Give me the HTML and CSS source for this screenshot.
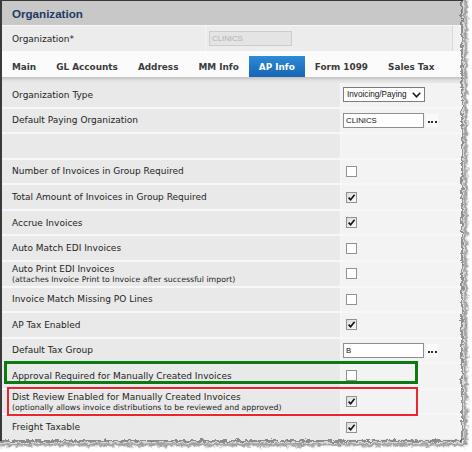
FILE: index.html
```html
<!DOCTYPE html>
<html>
<head>
<meta charset="utf-8">
<link rel="stylesheet" href="styles.css">
</head>
<body>
<div class="page">
  <div class="paper">
    <div class="header">Organization</div>
    <div class="org-row">
      <div class="org-label">Organization*</div>
      <div class="org-field"><span class="field disabled">CLINICS</span></div>
      <div class="org-end"></div>
    </div>
    <nav class="tabs">
      <span class="tab">Main</span>
      <span class="tab">GL Accounts</span>
      <span class="tab">Address</span>
      <span class="tab">MM Info</span>
      <span class="tab active">AP Info</span>
      <span class="tab">Form 1099</span>
      <span class="tab">Sales Tax</span>
    </nav>
    <div class="tab-shadow"></div>
    <div class="rows">
      <div class="row"><div class="label">Organization Type</div><div class="value"><span class="select">Invoicing/Paying<svg class="chev" width="9" height="6" viewBox="0 0 9 6"><path d="M0.8 0.8 L4.5 4.8 L8.2 0.8" fill="none" stroke="#1a1a1a" stroke-width="1.6"/></svg></span></div></div>
      <div class="row"><div class="label">Default Paying Organization</div><div class="value"><span class="field">CLINICS</span><span class="lookup"></span></div></div>
      <div class="row"><div class="label"></div><div class="value"></div></div>
      <div class="row"><div class="label">Number of Invoices in Group Required</div><div class="value"><span class="cb"></span></div></div>
      <div class="row"><div class="label">Total Amount of Invoices in Group Required</div><div class="value"><span class="cb on"><svg width="9" height="9" viewBox="0 0 9 9"><path d="M1.6 4.6 L3.6 6.8 L7.6 1.8" fill="none" stroke="#111" stroke-width="1.6"/></svg></span></div></div>
      <div class="row"><div class="label">Accrue Invoices</div><div class="value"><span class="cb on"><svg width="9" height="9" viewBox="0 0 9 9"><path d="M1.6 4.6 L3.6 6.8 L7.6 1.8" fill="none" stroke="#111" stroke-width="1.6"/></svg></span></div></div>
      <div class="row"><div class="label">Auto Match EDI Invoices</div><div class="value"><span class="cb"></span></div></div>
      <div class="row"><div class="label two"><span>Auto Print EDI Invoices</span><span class="sub">(attaches Invoice Print to Invoice after successful import)</span></div><div class="value"><span class="cb"></span></div></div>
      <div class="row"><div class="label">Invoice Match Missing PO Lines</div><div class="value"><span class="cb"></span></div></div>
      <div class="row"><div class="label">AP Tax Enabled</div><div class="value"><span class="cb on"><svg width="9" height="9" viewBox="0 0 9 9"><path d="M1.6 4.6 L3.6 6.8 L7.6 1.8" fill="none" stroke="#111" stroke-width="1.6"/></svg></span></div></div>
      <div class="row"><div class="label">Default Tax Group</div><div class="value"><span class="field">B</span><span class="lookup"></span></div></div>
      <div class="row"><div class="label">Approval Required for Manually Created Invoices</div><div class="value"><span class="cb"></span></div></div>
      <div class="row"><div class="label two"><span>Dist Review Enabled for Manually Created Invoices</span><span class="sub">(optionally allows invoice distributions to be reviewed and approved)</span></div><div class="value"><span class="cb on"><svg width="9" height="9" viewBox="0 0 9 9"><path d="M1.6 4.6 L3.6 6.8 L7.6 1.8" fill="none" stroke="#111" stroke-width="1.6"/></svg></span></div></div>
      <div class="row"><div class="label">Freight Taxable</div><div class="value"><span class="cb on"><svg width="9" height="9" viewBox="0 0 9 9"><path d="M1.6 4.6 L3.6 6.8 L7.6 1.8" fill="none" stroke="#111" stroke-width="1.6"/></svg></span></div></div>
    </div>
    <div class="mark mark-green"></div>
    <div class="mark mark-red"></div>
  </div>
  <svg class="torn" width="472" height="452" viewBox="0 0 472 452">
    <defs>
      <filter id="rough" filterUnits="userSpaceOnUse" x="-20" y="-20" width="520" height="500">
        <feTurbulence type="fractalNoise" baseFrequency="0.22" numOctaves="3" seed="7" result="n"/>
        <feDisplacementMap in="SourceGraphic" in2="n" scale="6" xChannelSelector="R" yChannelSelector="G"/>
      </filter>
      <filter id="soft" filterUnits="userSpaceOnUse" x="-20" y="-20" width="520" height="500">
        <feGaussianBlur stdDeviation="1.2"/>
      </filter>
    </defs>
    <g filter="url(#rough)">
      <path d="M462 -10 L462 441 L-10 441 L-10 470 L490 470 L490 -10 Z" fill="#fff"/>
      <path d="M465.5 -10 L465.5 444.5 L-10 444.5" fill="none" stroke="#8c8c8c" stroke-width="3" filter="url(#soft)"/>
      <path d="M462 -10 L462 441 L-10 441" fill="none" stroke="#2a2a2a" stroke-width="1"/>
    </g>
  </svg>
</div>
</body>
</html>
```

FILE: styles.css
```css
* { box-sizing: border-box; }

body {
  margin: 0;
  background: #ffffff;
  font-family: "DejaVu Sans", Verdana, sans-serif;
  color: #1e1e1e;
}

.page {
  position: relative;
  width: 472px;
  height: 452px;
  overflow: hidden;
}

.paper {
  position: relative;
  width: 470px;
  height: 448px;
  border-top: 1px solid #3a3a3a;
  border-left: 2px solid #3a3a3a;
  background: #e9e9e9;
}

.header {
  height: 24px;
  background: #c8c8c8;
  padding-left: 10px;
  display: flex;
  align-items: center;
  font-family: "Liberation Sans", Arial, sans-serif;
  font-weight: bold;
  font-size: 11.6px;
  color: #1e3a60;
}

.org-row {
  height: 26px;
  border-top: 1px solid #f6f6f6;
  background: #ececec;
  display: grid;
  grid-template-columns: 203px 247px 1fr;
}

.org-label {
  display: flex;
  align-items: center;
  padding-left: 10px;
  font-size: 9px;
}

.org-field {
  display: flex;
  align-items: center;
  padding-left: 3px;
  border-left: 1px solid #f4f4f4;
}

.org-end {
  border-left: 1px solid #d9d9d9;
  background: #f1f1f1;
}

.field {
  display: inline-flex;
  align-items: center;
  width: 81px;
  height: 15px;
  padding-left: 2px;
  background: #ffffff;
  border: 1px solid #8e8e8e;
  font-family: "Liberation Sans", Arial, sans-serif;
  font-size: 7.8px;
  color: #111;
}

.field.disabled {
  width: 83px;
  background: #e4e4e4;
  border-color: #cdcdcd;
  color: #b2b2b2;
}

.tabs {
  height: 26px;
  background: #fbfbfb;
  display: flex;
  align-items: flex-end;
}

.tab {
  height: 21px;
  line-height: 22px;
  padding: 0 10px;
  font-size: 8.9px;
  font-weight: bold;
  color: #3b3b3b;
  white-space: nowrap;
}

.tab.active {
  background: linear-gradient(#2d8bd8, #1765b3);
  color: #ffffff;
}

.tab-shadow {
  height: 4px;
  background: linear-gradient(#c2c2c2, #e4e4e4);
}

.row {
  display: grid;
  grid-template-columns: 339px 1fr;
  height: 25.57px;
  border-top: 2px solid #f7f7f7;
}

.row:first-child {
  border-top-color: #e6e6e6;
}

.label {
  display: flex;
  flex-direction: column;
  justify-content: center;
  padding: 1px 0 0 10px;
  background: #e9e9e9;
  border-right: 1px solid #f7f7f7;
  font-size: 9px;
  line-height: 11px;
  white-space: nowrap;
}

.label .sub {
  font-size: 7.8px;
  line-height: 10px;
}

.value {
  display: flex;
  align-items: center;
  padding-left: 2px;
  background: #f3f3f3;
}

.select {
  display: inline-flex;
  align-items: center;
  justify-content: space-between;
  width: 82px;
  height: 15px;
  padding: 0 3px 0 3px;
  background: #ffffff;
  border: 1px solid #7c7c7c;
  font-family: "Liberation Sans", Arial, sans-serif;
  font-size: 8.2px;
  color: #111;
}

.chev { display: block; }

.lookup {
  width: 12px;
  height: 13px;
  margin-left: 2px;
  margin-top: 1px;
  background:
    linear-gradient(90deg, #2c2c2c 0 2px, transparent 2px 3.5px, #2c2c2c 3.5px 5.5px, transparent 5.5px 7px, #2c2c2c 7px 9px, transparent 9px) 1.5px 7px / 10px 2px no-repeat,
    #fafafa;
}

.cb {
  display: inline-flex;
  align-items: center;
  justify-content: center;
  width: 11px;
  height: 11px;
  margin-left: 3px;
  background: #ffffff;
  border: 1px solid #929292;
}

.cb.on {
  background: linear-gradient(135deg, #dcdcdc, #fbfbfb);
}

.cb svg { display: block; }

.mark {
  position: absolute;
  pointer-events: none;
}

.mark-green {
  left: 2px;
  top: 360px;
  width: 414px;
  height: 23px;
  border: 3px solid #0b7a10;
}

.mark-red {
  left: 5px;
  top: 386px;
  width: 411px;
  height: 29px;
  border: 2px solid #e8262c;
}

.torn {
  position: absolute;
  left: 0;
  top: 0;
  pointer-events: none;
}
```
